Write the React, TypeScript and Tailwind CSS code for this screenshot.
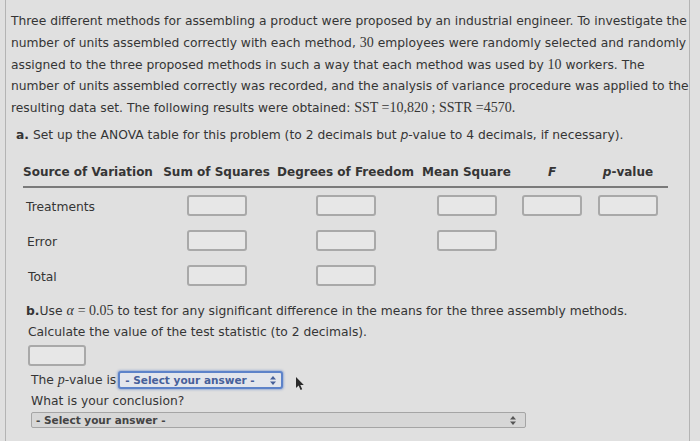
import React from "react";

const box =
  "h-[21px] w-[60px] rounded-[3px] border-2 border-[#a9a9a9] bg-[#e7e7e7]";

function Box() {
  return <div className={box} />;
}

function Arrows({ color }: { color: string }) {
  return (
    <svg width="6" height="9" viewBox="0 0 6 9">
      <path d="M3 0 L6 3.5 H0 Z" fill={color} />
      <path d="M3 9 L6 5.5 H0 Z" fill={color} />
    </svg>
  );
}

export default function App() {
  const math = { fontFamily: '"Liberation Serif", "DejaVu Serif", serif' };
  return (
    <div
      className="h-[441px] w-[700px] overflow-hidden bg-[#e0e0e0] text-[12.3px] text-[#353535]"
      style={{ fontFamily: '"DejaVu Sans", Verdana, sans-serif' }}
    >
      <div className="ml-[5px] mr-[10px] h-full border-x border-[#b4b4b4] pt-[11px]">
        {/* Problem statement */}
        <p className="whitespace-nowrap pl-[5px] leading-[21px]">
          Three different methods for assembling a product were proposed by an industrial engineer. To investigate the
          <br />
          number of units assembled correctly with each method, <span style={math} className="text-[14px]">30</span> employees were randomly selected and randomly
          <br />
          assigned to the three proposed methods in such a way that each method was used by <span style={math} className="text-[14px]">10</span> workers. The
          <br />
          number of units assembled correctly was recorded, and the analysis of variance procedure was applied to the
          <br />
          resulting data set. The following results were obtained:{" "}
          <span style={math} className="text-[14px]">
            SST =10,820 ; SSTR =4570.
          </span>
        </p>

        <p className="mt-[6px] whitespace-nowrap pl-[10px] leading-[21px]">
          <b>a.</b> Set up the ANOVA table for this problem (to 2 decimals but <i>p</i>-value to 4 decimals, if necessary).
        </p>

        {/* ANOVA table */}
        <div className="ml-[17px] mt-[15px] w-[645px]">
          <div className="grid grid-cols-[136px_115px_143px_99px_72px_80px] border-b-2 border-[#7a7a7a] pb-[3px] text-center text-[12px] font-bold leading-[22px] whitespace-nowrap">
            <div className="text-left">Source of Variation</div>
            <div>Sum of Squares</div>
            <div>Degrees of Freedom</div>
            <div>Mean Square</div>
            <div className="italic">F</div>
            <div>
              <i>p</i>-value
            </div>
          </div>

          <div className="grid h-[35px] grid-cols-[136px_115px_143px_99px_72px_80px] items-center justify-items-center">
            <div className="justify-self-start pl-[3px] pt-[3px]">Treatments</div>
            <Box />
            <Box />
            <Box />
            <Box />
            <Box />
          </div>
          <div className="grid h-[35px] grid-cols-[136px_115px_143px_99px_72px_80px] items-center justify-items-center">
            <div className="justify-self-start pl-[4px] pt-[3px]">Error</div>
            <Box />
            <Box />
            <Box />
            <div />
            <div />
          </div>
          <div className="grid h-[35px] grid-cols-[136px_115px_143px_99px_72px_80px] items-center justify-items-center">
            <div className="justify-self-start pl-[5px] pt-[3px]">Total</div>
            <Box />
            <Box />
            <div />
            <div />
            <div />
          </div>
        </div>

        {/* Part b */}
        <div className="mt-[7px] pl-[20px] leading-[21px]">
          <p className="whitespace-nowrap">
            <b>b.</b>Use <span style={math} className="text-[14px] italic">α</span>{" "}
            <span style={math} className="text-[14px]">= 0.05</span> to test for any significant difference in the means for the three assembly methods.
          </p>
          <p className="whitespace-nowrap pl-[2px]">Calculate the value of the test statistic (to 2 decimals).</p>
          <div className="mt-[2px] pl-[2px]">
            <div className="h-[21px] w-[58px] rounded-[3px] border-2 border-[#a9a9a9] bg-[#e7e7e7]" />
          </div>
          <div className="mt-[3px] flex items-center pl-[5px]">
            <span>
              The <span style={math} className="text-[14px] italic">p</span>-value is
            </span>
            <div className="ml-[2px] flex h-[18px] w-[165px] items-center justify-between rounded-[3px] border-2 border-[#5d83c9] bg-[#e3e6ec] px-[5px] text-[10.5px] font-bold text-[#46609a] shadow-[0_0_2px_1px_rgba(93,131,201,0.5)]">
              <span>- Select your answer -</span>
              <Arrows color="#46609a" />
            </div>
            <svg className="ml-[12px] mt-[6px]" width="10" height="15" viewBox="0 0 10 15">
              <path d="M1 1 L1 12 L3.6 9.6 L5.6 14 L7.2 13.3 L5.3 9 L8.8 9 Z" fill="#2a2a2a" />
            </svg>
          </div>
          <p className="whitespace-nowrap pl-[5px]">What is your conclusion?</p>
          <div className="ml-[5px] flex h-[16px] w-[495px] items-center justify-between rounded-[2px] border border-[#a5a5a5] bg-[#d7d7d7] pl-[4px] pr-[9px] text-[10.5px] font-bold text-[#444]">
            <span>- Select your answer -</span>
            <Arrows color="#555" />
          </div>
        </div>
      </div>
    </div>
  );
}
